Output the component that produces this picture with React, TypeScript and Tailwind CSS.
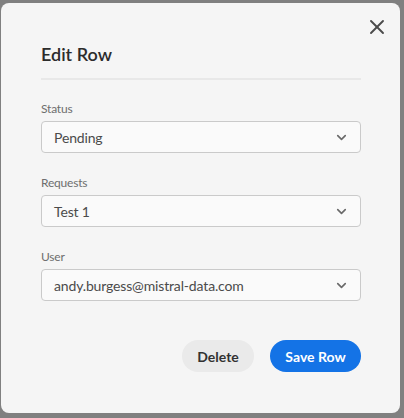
import { ChevronDown, X } from 'lucide-react';

const fields = [
  { label: 'Status', value: 'Pending' },
  { label: 'Requests', value: 'Test 1' },
  { label: 'User', value: 'andy.burgess@mistral-data.com' },
];

function SelectField({ label, value }: { label: string; value: string }) {
  return (
    <div className="flex flex-col">
      <label className="text-[12px] leading-4 tracking-[-0.2px] text-[#6e6e6e] mb-[4px]">{label}</label>
      <div className="h-[32px] flex items-center justify-between rounded-[4px] border border-[#cacaca] bg-[#fafafa] pl-[12px] pr-[11px]">
        <span className="text-[14px] tracking-[-0.15px] text-[#4b4b4b]">{value}</span>
        <ChevronDown className="w-[15px] h-[15px] text-[#6a6a6a]" strokeWidth={2.6} />
      </div>
    </div>
  );
}

export default function App() {
  return (
    <div
      className="w-[404px] h-[418px] bg-[#808080] pl-[1px] pt-[3px] pr-[4px] pb-[5px]"
      style={{ fontFamily: 'Lato, "Noto Sans", sans-serif' }}
    >
      <div className="relative h-full w-full rounded-[8px] bg-[#f5f5f5] pl-[40px] pr-[39px] pt-[39px]">
        <button className="absolute right-[11px] top-[12px] text-[#4b4b4b]" aria-label="Close">
          <X className="w-[24px] h-[24px]" strokeWidth={1.9} />
        </button>

        <h1 className="text-[18px] leading-6 font-semibold text-[#2c2c2c]">Edit Row</h1>
        <div className="mt-[12px] h-[2px] bg-[#e8e8e8]" />

        <div className="mt-[21px] flex flex-col gap-[22px]">
          {fields.map((f) => (
            <SelectField key={f.label} label={f.label} value={f.value} />
          ))}
        </div>

        <div className="mt-[39px] flex justify-end gap-[16px]">
          <button className="h-[32px] w-[72px] rounded-full bg-[#eaeaea] text-[14px] font-bold text-[#323232]">
            Delete
          </button>
          <button className="h-[32px] w-[91px] rounded-full bg-[#1473e6] text-[14px] font-bold text-white">
            Save Row
          </button>
        </div>
      </div>
    </div>
  );
}
